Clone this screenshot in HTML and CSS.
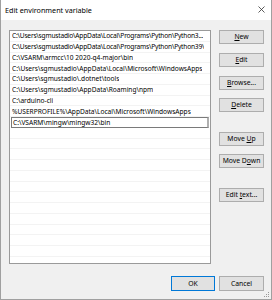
FILE: index.html
```html
<!DOCTYPE html>
<html>
<head>
<meta charset="utf-8">
<link rel="stylesheet" href="styles.css">
</head>
<body>
<div class="window">
  <div class="titlebar">
    <span class="title">Edit environment variable</span>
    <svg class="close" width="7" height="7" viewBox="0 0 7 7"><path d="M0.5 0.5 L6.5 6.5 M6.5 0.5 L0.5 6.5" stroke="#333" stroke-width="0.8" fill="none"/></svg>
  </div>
  <div class="content">
    <div class="main">
      <div class="list">
        <div class="row tight"><span class="txt">C:\Users\sgmustadio\AppData\Local\Programs\Python\Python3...</span></div>
        <div class="row tight"><span class="txt">C:\Users\sgmustadio\AppData\Local\Programs\Python\Python39\</span></div>
        <div class="row"><span class="txt">C:\VSARM\armcc\10 2020-q4-major\bin</span></div>
        <div class="row"><span class="txt">C:\Users\sgmustadio\AppData\Local\Microsoft\WindowsApps</span></div>
        <div class="row"><span class="txt">C:\Users\sgmustadio\.dotnet\tools</span></div>
        <div class="row"><span class="txt">C:\Users\sgmustadio\AppData\Roaming\npm</span></div>
        <div class="row"><span class="txt">C:\arduino-cli</span></div>
        <div class="row"><span class="txt">%USERPROFILE%\AppData\Local\Microsoft\WindowsApps</span></div>
        <div class="row sel"><div class="editbox">C:\VSARM\mingw\mingw32\bin</div></div>
        <div class="row"></div>
        <div class="row"></div>
        <div class="row"></div>
        <div class="row"></div>
        <div class="row"></div>
        <div class="row"></div>
        <div class="row"></div>
        <div class="row"></div>
        <div class="row"></div>
        <div class="row"></div>
        <div class="row"></div>
        <div class="row"></div>
      </div>
      <div class="side">
        <button class="btn b-new"><u>N</u>ew</button>
        <button class="btn b-edit"><u>E</u>dit</button>
        <button class="btn b-browse"><u>B</u>rowse...</button>
        <button class="btn b-delete"><u>D</u>elete</button>
        <button class="btn b-up">Move <u>U</u>p</button>
        <button class="btn b-down">Move D<u>o</u>wn</button>
        <button class="btn b-text">Edit <u>t</u>ext...</button>
      </div>
    </div>
    <div class="footer">
      <button class="btn ok">OK</button>
      <button class="btn cancel">Cancel</button>
    </div>
  </div>
  <svg class="grip" width="6" height="6" viewBox="0 0 6 6">
    <rect x="4" y="0" width="1" height="1" fill="#999"/>
    <rect x="2" y="2" width="1" height="1" fill="#999"/>
    <rect x="4" y="2" width="1" height="1" fill="#999"/>
    <rect x="0" y="4" width="1" height="1" fill="#999"/>
    <rect x="2" y="4" width="1" height="1" fill="#999"/>
    <rect x="4" y="4" width="1" height="1" fill="#999"/>
  </svg>
</div>
</body>
</html>
```
FILE: styles.css
```css
html, body {
  margin: 0;
  padding: 0;
  background: #f0f0f0;
}
body {
  font-family: "Noto Sans", "Open Sans", sans-serif;
  color: #000;
}
.window {
  position: relative;
  width: 272px;
  height: 300px;
  box-sizing: border-box;
  border-left: 1px solid #a0a0a0;
  border-right: 1px solid #a0a0a0;
  border-bottom: 1px solid #a0a0a0;
  background: #f0f0f0;
  display: flex;
  flex-direction: column;
}
.titlebar {
  height: 19px;
  background: #fff;
  display: flex;
  align-items: center;
  justify-content: space-between;
  padding: 0 6px 1px 4px;
}
.title {
  font-size: 7.2px;
  color: #000;
}
.close {
  display: block;
}
.content {
  padding: 10px 7px 0 8px;
}
.main {
  display: flex;
  gap: 8px;
}
.list {
  width: 202px;
  height: 234px;
  box-sizing: border-box;
  border: 1px solid #9a9a9a;
  background: #fff;
  overflow: hidden;
}
.row {
  height: 10.75px;
  box-sizing: border-box;
  border-bottom: 1px solid #f3f3f3;
  display: flex;
  align-items: center;
  padding-left: 2px;
  padding-right: 1px;
  font-size: 6.6px;
  white-space: nowrap;
  overflow: hidden;
}
.row.tight {
  letter-spacing: -0.2px;
}
.txt {
  overflow: hidden;
}
.row.sel {
  padding-left: 1px;
  border-bottom: none;
}
.editbox {
  flex: 1;
  height: 100%;
  box-sizing: border-box;
  border: 1px solid #7a7a7a;
  border-right: 2px solid #b0b0b0;
  padding-left: 1px;
  display: flex;
  align-items: center;
  background: #fff;
}
.side {
  width: 45px;
  display: flex;
  flex-direction: column;
}
.btn {
  font-family: "Noto Sans", "Open Sans", sans-serif;
  font-size: 6.8px;
  color: #000;
  background: #e1e1e1;
  border: 1px solid #adadad;
  padding: 0;
  margin: 0;
  height: 14px;
  width: 45px;
  box-sizing: border-box;
  text-align: center;
  line-height: 12px;
}
.b-edit { margin-top: 9px; }
.b-browse { margin-top: 9px; }
.b-delete { margin-top: 8px; }
.b-up { margin-top: 20px; }
.b-down { margin-top: 8px; }
.b-text { margin-top: 20px; }
.footer {
  display: flex;
  justify-content: flex-end;
  gap: 4px;
  margin-top: 12px;
}
.footer .btn {
  height: 15px;
  line-height: 13px;
}
.ok {
  width: 44px;
  border-color: #0078d7;
}
.grip {
  position: absolute;
  right: 1px;
  bottom: 1px;
}
```
